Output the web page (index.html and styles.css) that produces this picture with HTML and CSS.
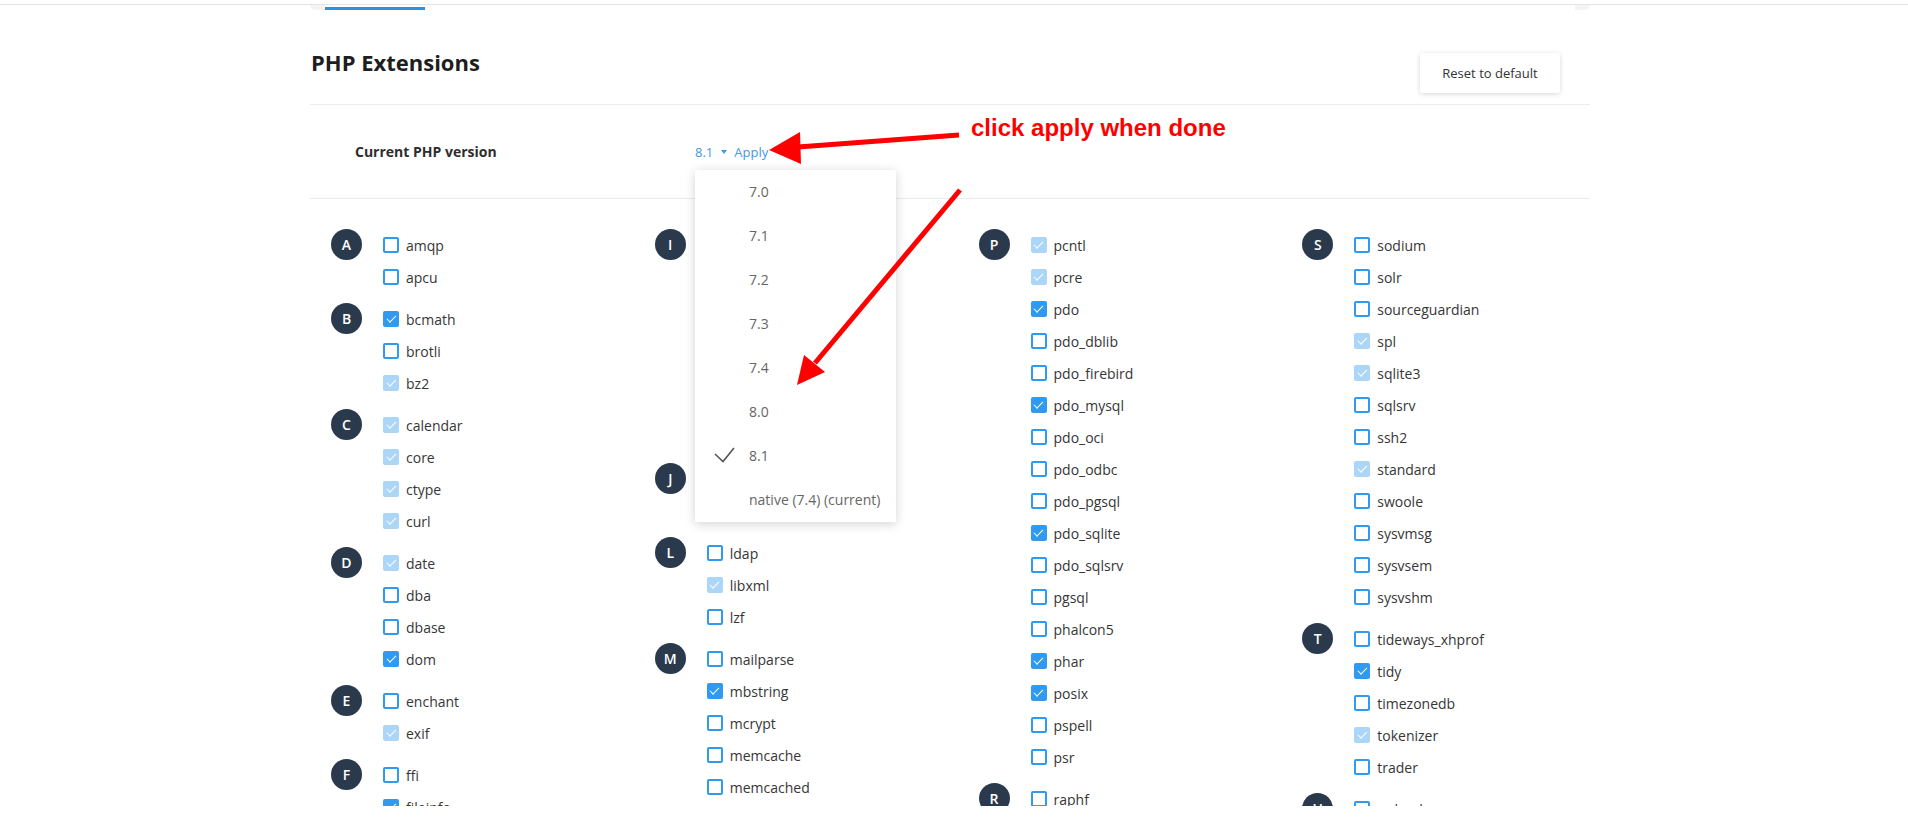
FILE: index.html
```html
<!DOCTYPE html>
<html lang="en">
<head>
    <meta charset="UTF-8">
    <meta name="viewport" content="width=device-width, initial-scale=1.0">
    <title>PHP Extensions</title>
    <link rel="stylesheet" href="styles.css">
</head>
<body>

<div class="viewport">
<div class="topline"></div>

<div class="page">
    <div class="tabs"><span class="tab-active"></span></div>

    <!-- Title + reset -->
    <div class="head">
        <h1>PHP Extensions</h1>
        <button class="reset-btn">Reset to default</button>
    </div>

    <!-- Version selector -->
    <div class="version-row">
        <div class="version-label">Current PHP version</div>
        <div class="version-pick">
            <span class="ver">8.1</span><span class="caret"></span><a class="apply">Apply</a>

            <ul class="ver-menu">
                <li>7.0</li>
                <li>7.1</li>
                <li>7.2</li>
                <li>7.3</li>
                <li>7.4</li>
                <li>8.0</li>
                <li class="selected">
                    <svg class="tick" width="22" height="18" viewBox="0 0 22 18"><path d="M1 8 L9 15.5 L20 2" fill="none" stroke="#555" stroke-width="1.6"/></svg>
                    8.1
                </li>
                <li>native (7.4) (current)</li>
            </ul>
        </div>
    </div>

    <!-- Extensions list -->
    <div class="ext-grid">
        <div class="ext-col">
            <div class="group">
                <span class="letter">A</span>
                <ul class="items">
                    <li><span class="cb"></span>amqp</li>
                    <li><span class="cb"></span>apcu</li>
                </ul>
            </div>
            <div class="group">
                <span class="letter">B</span>
                <ul class="items">
                    <li><span class="cb on"></span>bcmath</li>
                    <li><span class="cb"></span>brotli</li>
                    <li><span class="cb dis"></span>bz2</li>
                </ul>
            </div>
            <div class="group">
                <span class="letter">C</span>
                <ul class="items">
                    <li><span class="cb dis"></span>calendar</li>
                    <li><span class="cb dis"></span>core</li>
                    <li><span class="cb dis"></span>ctype</li>
                    <li><span class="cb dis"></span>curl</li>
                </ul>
            </div>
            <div class="group">
                <span class="letter">D</span>
                <ul class="items">
                    <li><span class="cb dis"></span>date</li>
                    <li><span class="cb"></span>dba</li>
                    <li><span class="cb"></span>dbase</li>
                    <li><span class="cb on"></span>dom</li>
                </ul>
            </div>
            <div class="group">
                <span class="letter">E</span>
                <ul class="items">
                    <li><span class="cb"></span>enchant</li>
                    <li><span class="cb dis"></span>exif</li>
                </ul>
            </div>
            <div class="group">
                <span class="letter">F</span>
                <ul class="items">
                    <li><span class="cb"></span>ffi</li>
                    <li><span class="cb on"></span>fileinfo</li>
                    <li><span class="cb dis"></span>filter</li>
                    <li><span class="cb dis"></span>ftp</li>
                </ul>
            </div>
        </div>

        <div class="ext-col">
            <div class="group">
                <span class="letter">I</span>
                <ul class="items">
                    <li><span class="cb"></span>igbinary</li>
                    <li><span class="cb"></span>imagick</li>
                    <li><span class="cb"></span>imap</li>
                    <li><span class="cb"></span>inotify</li>
                    <li><span class="cb"></span>interbase</li>
                    <li><span class="cb on"></span>intl</li>
                    <li><span class="cb"></span>ioncube_loader</li>
                </ul>
            </div>
            <div class="group">
                <span class="letter">J</span>
                <ul class="items">
                    <li><span class="cb"></span>jsmin</li>
                    <li><span class="cb dis"></span>json</li>
                </ul>
            </div>
            <div class="group">
                <span class="letter">L</span>
                <ul class="items">
                    <li><span class="cb"></span>ldap</li>
                    <li><span class="cb dis"></span>libxml</li>
                    <li><span class="cb"></span>lzf</li>
                </ul>
            </div>
            <div class="group">
                <span class="letter">M</span>
                <ul class="items">
                    <li><span class="cb"></span>mailparse</li>
                    <li><span class="cb on"></span>mbstring</li>
                    <li><span class="cb"></span>mcrypt</li>
                    <li><span class="cb"></span>memcache</li>
                    <li><span class="cb"></span>memcached</li>
                    <li><span class="cb"></span>mongodb</li>
                </ul>
            </div>
        </div>

        <div class="ext-col">
            <div class="group">
                <span class="letter">P</span>
                <ul class="items">
                    <li><span class="cb dis"></span>pcntl</li>
                    <li><span class="cb dis"></span>pcre</li>
                    <li><span class="cb on"></span>pdo</li>
                    <li><span class="cb"></span>pdo_dblib</li>
                    <li><span class="cb"></span>pdo_firebird</li>
                    <li><span class="cb on"></span>pdo_mysql</li>
                    <li><span class="cb"></span>pdo_oci</li>
                    <li><span class="cb"></span>pdo_odbc</li>
                    <li><span class="cb"></span>pdo_pgsql</li>
                    <li><span class="cb on"></span>pdo_sqlite</li>
                    <li><span class="cb"></span>pdo_sqlsrv</li>
                    <li><span class="cb"></span>pgsql</li>
                    <li><span class="cb"></span>phalcon5</li>
                    <li><span class="cb on"></span>phar</li>
                    <li><span class="cb on"></span>posix</li>
                    <li><span class="cb"></span>pspell</li>
                    <li><span class="cb"></span>psr</li>
                </ul>
            </div>
            <div class="group">
                <span class="letter">R</span>
                <ul class="items">
                    <li><span class="cb"></span>raphf</li>
                    <li><span class="cb"></span>rar</li>
                </ul>
            </div>
        </div>

        <div class="ext-col">
            <div class="group">
                <span class="letter">S</span>
                <ul class="items">
                    <li><span class="cb"></span>sodium</li>
                    <li><span class="cb"></span>solr</li>
                    <li><span class="cb"></span>sourceguardian</li>
                    <li><span class="cb dis"></span>spl</li>
                    <li><span class="cb dis"></span>sqlite3</li>
                    <li><span class="cb"></span>sqlsrv</li>
                    <li><span class="cb"></span>ssh2</li>
                    <li><span class="cb dis"></span>standard</li>
                    <li><span class="cb"></span>swoole</li>
                    <li><span class="cb"></span>sysvmsg</li>
                    <li><span class="cb"></span>sysvsem</li>
                    <li><span class="cb"></span>sysvshm</li>
                </ul>
            </div>
            <div class="group">
                <span class="letter">T</span>
                <ul class="items">
                    <li><span class="cb"></span>tideways_xhprof</li>
                    <li><span class="cb on"></span>tidy</li>
                    <li><span class="cb"></span>timezonedb</li>
                    <li><span class="cb dis"></span>tokenizer</li>
                    <li><span class="cb"></span>trader</li>
                </ul>
            </div>
            <div class="group">
                <span class="letter">U</span>
                <ul class="items">
                    <li><span class="cb"></span>uploadprogress</li>
                    <li><span class="cb"></span>uuid</li>
                </ul>
            </div>
        </div>
    </div>
</div>
</div>

<!-- Annotation drawn over the screenshot -->
<svg class="marks" width="1908" height="825" viewBox="0 0 1908 825">
    <line x1="959" y1="135" x2="798" y2="147" stroke="#ff0000" stroke-width="5"/>
    <polygon points="769,150 800,132 801,164" fill="#ff0000"/>
    <line x1="960" y1="190" x2="815" y2="363" stroke="#ff0000" stroke-width="5"/>
    <polygon points="797,385 804,355 825,372" fill="#ff0000"/>
</svg>
<div class="note">click apply when done</div>

</body>
</html>
```

FILE: styles.css
```css
/* Page */
body {
    margin: 0;
    font-family: "Open Sans", "DejaVu Sans", sans-serif;
    color: #333;
    background-color: #fff;
}

/* visible part of the scrolled panel */
.viewport {
    height: 806px;
    overflow: hidden;
}

.topline {
    height: 4px;
    border-bottom: 1px solid #e4e4e4;
}

.page {
    width: 1280px;
    margin-left: calc(50% - 644px);
}

/* Tab strip (scrolled off the top) */
.tabs {
    position: relative;
    height: 3px;
    padding-top: 2px;
}

.tabs::before,
.tabs::after {
    content: '';
    position: absolute;
    top: 0;
    width: 15px;
    height: 5px;
    background-color: #f3f4f6;
}

.tabs::before {
    left: 0;
    border-bottom-left-radius: 5px;
}

.tabs::after {
    right: 0;
    border-bottom-right-radius: 5px;
}

.tab-active {
    display: block;
    margin-left: 15px;
    width: 100px;
    height: 3px;
    background-color: #2f8fe0;
}

/* Header */
.head {
    display: flex;
    justify-content: space-between;
    align-items: flex-start;
    padding-bottom: 11px;
    border-bottom: 1px solid #ebebeb;
}

.head h1 {
    margin: 37px 0 0 1px;
    font-size: 22px;
    line-height: 30px;
    font-weight: 700;
    color: #1e1e1e;
}

.reset-btn {
    margin: 43px 30px 0 0;
    width: 140px;
    height: 40px;
    border: none;
    border-radius: 3px;
    background-color: #fff;
    box-shadow: 0 1px 5px rgba(0, 0, 0, 0.16);
    font-family: inherit;
    font-size: 13px;
    color: #333;
    cursor: pointer;
}

/* Version row */
.version-row {
    display: flex;
    align-items: center;
    height: 93px;
    border-bottom: 1px solid #ebebeb;
}

.version-label {
    width: 340px;
    padding-left: 45px;
    font-size: 14px;
    font-weight: 700;
    color: #2e2e2e;
}

.version-pick {
    position: relative;
    display: flex;
    align-items: center;
    font-size: 13px;
    line-height: 18px;
    color: #3f98e6;
}

.caret {
    width: 0;
    height: 0;
    margin: 1px 7px 0 8px;
    border-left: 3.5px solid transparent;
    border-right: 3.5px solid transparent;
    border-top: 4px solid #3f98e6;
}

.apply {
    cursor: pointer;
}

.ver-menu {
    position: absolute;
    top: 100%;
    left: 0;
    z-index: 5;
    width: 201px;
    margin: 9px 0 0;
    padding: 0;
    list-style: none;
    background-color: #fff;
    box-shadow: 0 2px 10px rgba(0, 0, 0, 0.18);
}

.ver-menu li {
    position: relative;
    height: 44px;
    line-height: 44px;
    padding-left: 54px;
    font-size: 14px;
    color: #666;
}

.ver-menu .tick {
    position: absolute;
    left: 19px;
    top: 12px;
}

/* Extensions grid */
.ext-grid {
    display: grid;
    grid-template-columns: repeat(4, 1fr);
    column-gap: 36px;
    align-items: start;
    padding: 30px 0 0 21px;
}

.group {
    display: flex;
    align-items: flex-start;
    margin-bottom: 10px;
}

.letter {
    flex: none;
    display: flex;
    align-items: center;
    justify-content: center;
    width: 31px;
    height: 31px;
    margin-right: 21px;
    border-radius: 50%;
    background-color: #2a3a4c;
    color: #fff;
    font-size: 14px;
    font-weight: 600;
}

.items {
    list-style: none;
    margin: 0;
    padding: 0;
}

.items li {
    display: flex;
    align-items: center;
    height: 32px;
    font-size: 14px;
    color: #363636;
}

.cb {
    position: relative;
    flex: none;
    box-sizing: border-box;
    width: 16px;
    height: 16px;
    margin-right: 7px;
    border: 2px solid #2f9af0;
    border-radius: 2px;
    background-color: #fff;
}

.cb.on {
    background-color: #2f9af0;
}

.cb.dis {
    border-color: #acd6f8;
    background-color: #acd6f8;
}

.cb.on::after,
.cb.dis::after {
    content: '';
    position: absolute;
    left: 3.5px;
    top: 0;
    width: 3.5px;
    height: 8px;
    border: solid #fff;
    border-width: 0 1.5px 1.5px 0;
    transform: rotate(45deg);
}

/* Red annotation */
.marks {
    position: absolute;
    top: 0;
    left: 0;
    z-index: 10;
    pointer-events: none;
}

.note {
    position: absolute;
    top: 114px;
    left: 971px;
    z-index: 10;
    font-family: "Liberation Sans", Arial, sans-serif;
    font-size: 24px;
    font-weight: 700;
    color: #ff0000;
}
```
